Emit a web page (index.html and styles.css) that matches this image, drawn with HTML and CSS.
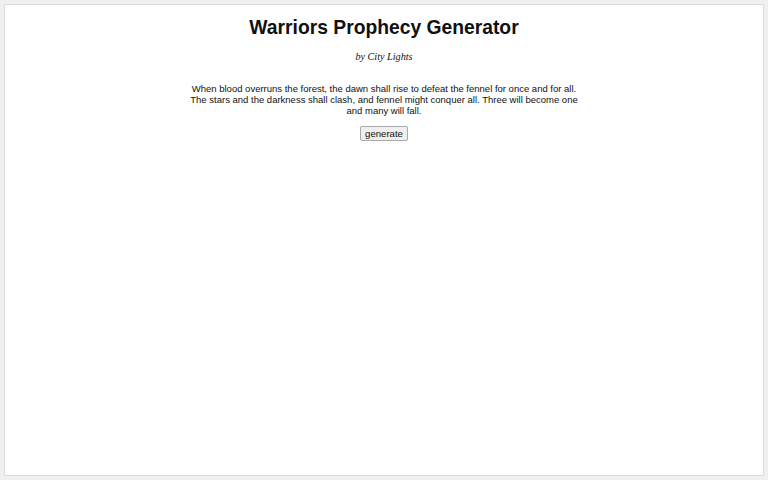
FILE: index.html
```html
<!DOCTYPE html>
<html lang="en">
<head>
    <meta charset="UTF-8">
    <title>Warriors Prophecy Generator</title>
    <link rel="stylesheet" href="styles.css">
</head>
<body>
    <div class="page">
        <h1>Warriors Prophecy Generator</h1>
        <p class="byline">by City Lights</p>
        <p class="prophecy" id="prophecy">When blood overruns the forest, the dawn shall rise to defeat the fennel for once and for all. The stars and the darkness shall clash, and fennel might conquer all. Three will become one and many will fall.</p>
        <button class="gen">generate</button>
    </div>
</body>
</html>
```
FILE: styles.css
```css
body {
    margin: 0;
    padding: 4px;
    background: #efefef;
    font-family: "Liberation Sans", Arial, sans-serif;
    color: #111;
}
.page {
    height: 472px;
    box-sizing: border-box;
    background: #fff;
    border: 1px solid #dcdcdc;
    text-align: center;
    padding-top: 12px;
}
h1 {
    margin: 0;
    font-size: 19.3px;
    line-height: 22px;
}
.byline {
    margin: 12px 0 0;
    font-family: "Liberation Serif", "Times New Roman", serif;
    font-style: italic;
    font-size: 10.2px;
    line-height: 12px;
}
.prophecy {
    width: 394px;
    margin: 20px auto 0;
    font-size: 9.5px;
    line-height: 11px;
}
.gen {
    margin-top: 10px;
    font-family: "Liberation Sans", Arial, sans-serif;
    font-size: 9.6px;
    padding: 1px 4px;
    background: #efefef;
    border: 1px solid #a9a9a9;
    border-radius: 2px;
    color: #111;
}
```
